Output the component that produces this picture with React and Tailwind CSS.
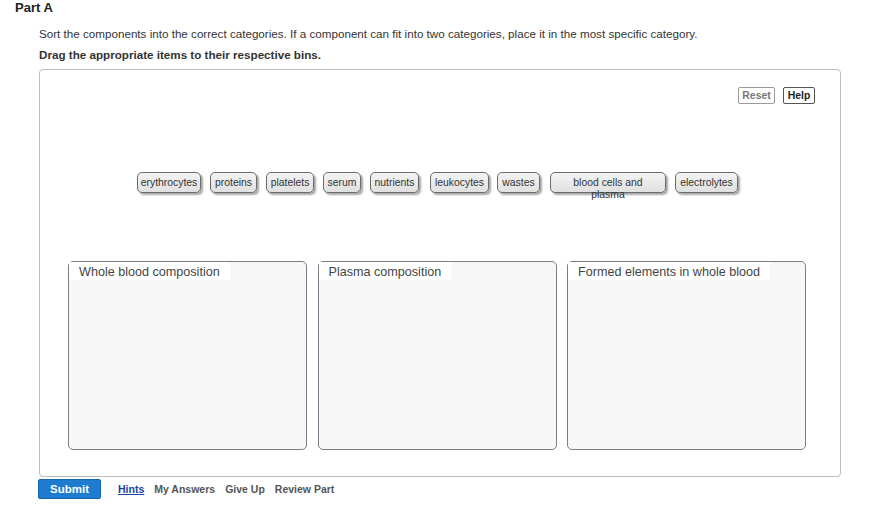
import React from 'react';

const items = [
    { label: 'erythrocytes', w: 'w-[64px]', ml: 'ml-0' },
    { label: 'proteins', w: 'w-[47px]', ml: 'ml-[9px]' },
    { label: 'platelets', w: 'w-[48px]', ml: 'ml-[9px]' },
    { label: 'serum', w: 'w-[38px]', ml: 'ml-[9px]' },
    { label: 'nutrients', w: 'w-[49px]', ml: 'ml-[9px]' },
    { label: 'leukocytes', w: 'w-[59px]', ml: 'ml-[11px]' },
    { label: 'wastes', w: 'w-[43px]', ml: 'ml-[8px]' },
    { label: 'blood cells and plasma', w: 'w-[116px]', ml: 'ml-[10px]', wrap: true },
    { label: 'electrolytes', w: 'w-[63px]', ml: 'ml-[9px]' },
];

const bins = ['Whole blood composition', 'Plasma composition', 'Formed elements in whole blood'];

function Chip({ label, w, ml, wrap }) {
    return (
        <div
            className={`${w} ${ml} ${wrap ? 'px-[20px]' : 'px-0 whitespace-nowrap'} h-[21px] shrink-0 rounded-[5px] border border-[#6b6b6b] bg-gradient-to-b from-[#f4f4f4] to-[#e0e0e0] shadow-[2px_2px_2px_rgba(0,0,0,0.35)] text-[10.4px] leading-[12px] text-[#333] text-center pt-[4px]`}
        >
            {label}
        </div>
    );
}

function Bin({ title }) {
    return (
        <div className="w-[239px] h-[189px] rounded-[5px] border border-[#7d7d85] bg-[#f7f7f7]">
            <div className="w-fit h-[18px] bg-white px-[10px] pt-[2px] text-[12.6px] leading-[16px] text-[#444] whitespace-nowrap">
                {title}
            </div>
        </div>
    );
}

export default function App() {
    return (
        <main className="w-[877px] h-[514px] bg-white font-['Liberation_Sans',Arial,sans-serif] text-[#333]">
            <h1 className="pl-[15px] text-[13px] leading-[15px] font-bold text-[#222]">Part A</h1>

            <div className="pl-[39px]">
                <p className="mt-[12px] text-[11.65px] leading-[13px] text-[#333] whitespace-nowrap">
                    Sort the components into the correct categories. If a component can fit into two categories, place it in the most specific category.
                </p>
                <p className="mt-[8px] text-[11.65px] leading-[13px] font-bold text-[#333]">
                    Drag the appropriate items to their respective bins.
                </p>

                {/* Drag-and-drop area */}
                <div className="mt-[8px] w-[802px] h-[408px] rounded-[4px] border border-[#bdbdbd] bg-white">
                    <div className="flex justify-end gap-[8px] pt-[17px] pr-[25px]">
                        <button className="w-[37px] h-[17px] rounded-[2px] border border-[#9a9a9a] bg-white text-[10.4px] leading-[14px] font-bold text-[#777]">
                            Reset
                        </button>
                        <button className="w-[32px] h-[17px] rounded-[2px] border border-[#555] bg-white text-[10.4px] leading-[14px] font-bold text-[#222]">
                            Help
                        </button>
                    </div>

                    <div className="flex pl-[97px] mt-[68px] h-[21px]">
                        {items.map((item) => (
                            <Chip key={item.label} {...item} />
                        ))}
                    </div>

                    <div className="flex gap-[10.5px] pl-[28px] mt-[68px]">
                        {bins.map((b) => (
                            <Bin key={b} title={b} />
                        ))}
                    </div>
                </div>
            </div>

            {/* Actions */}
            <div className="flex items-center pl-[38px] mt-[2px]">
                <button className="w-[63px] h-[20px] rounded-[2px] border border-[#1565a8] bg-[#1d7bd0] text-white text-[11.5px] leading-[18px] font-bold">
                    Submit
                </button>
                <div className="flex gap-[10px] ml-[17px] pt-[2px] text-[10.5px] font-bold text-[#555]">
                    <a className="text-[#1a3fa3] underline">Hints</a>
                    <span>My Answers</span>
                    <span>Give Up</span>
                    <span>Review Part</span>
                </div>
            </div>
        </main>
    );
}
